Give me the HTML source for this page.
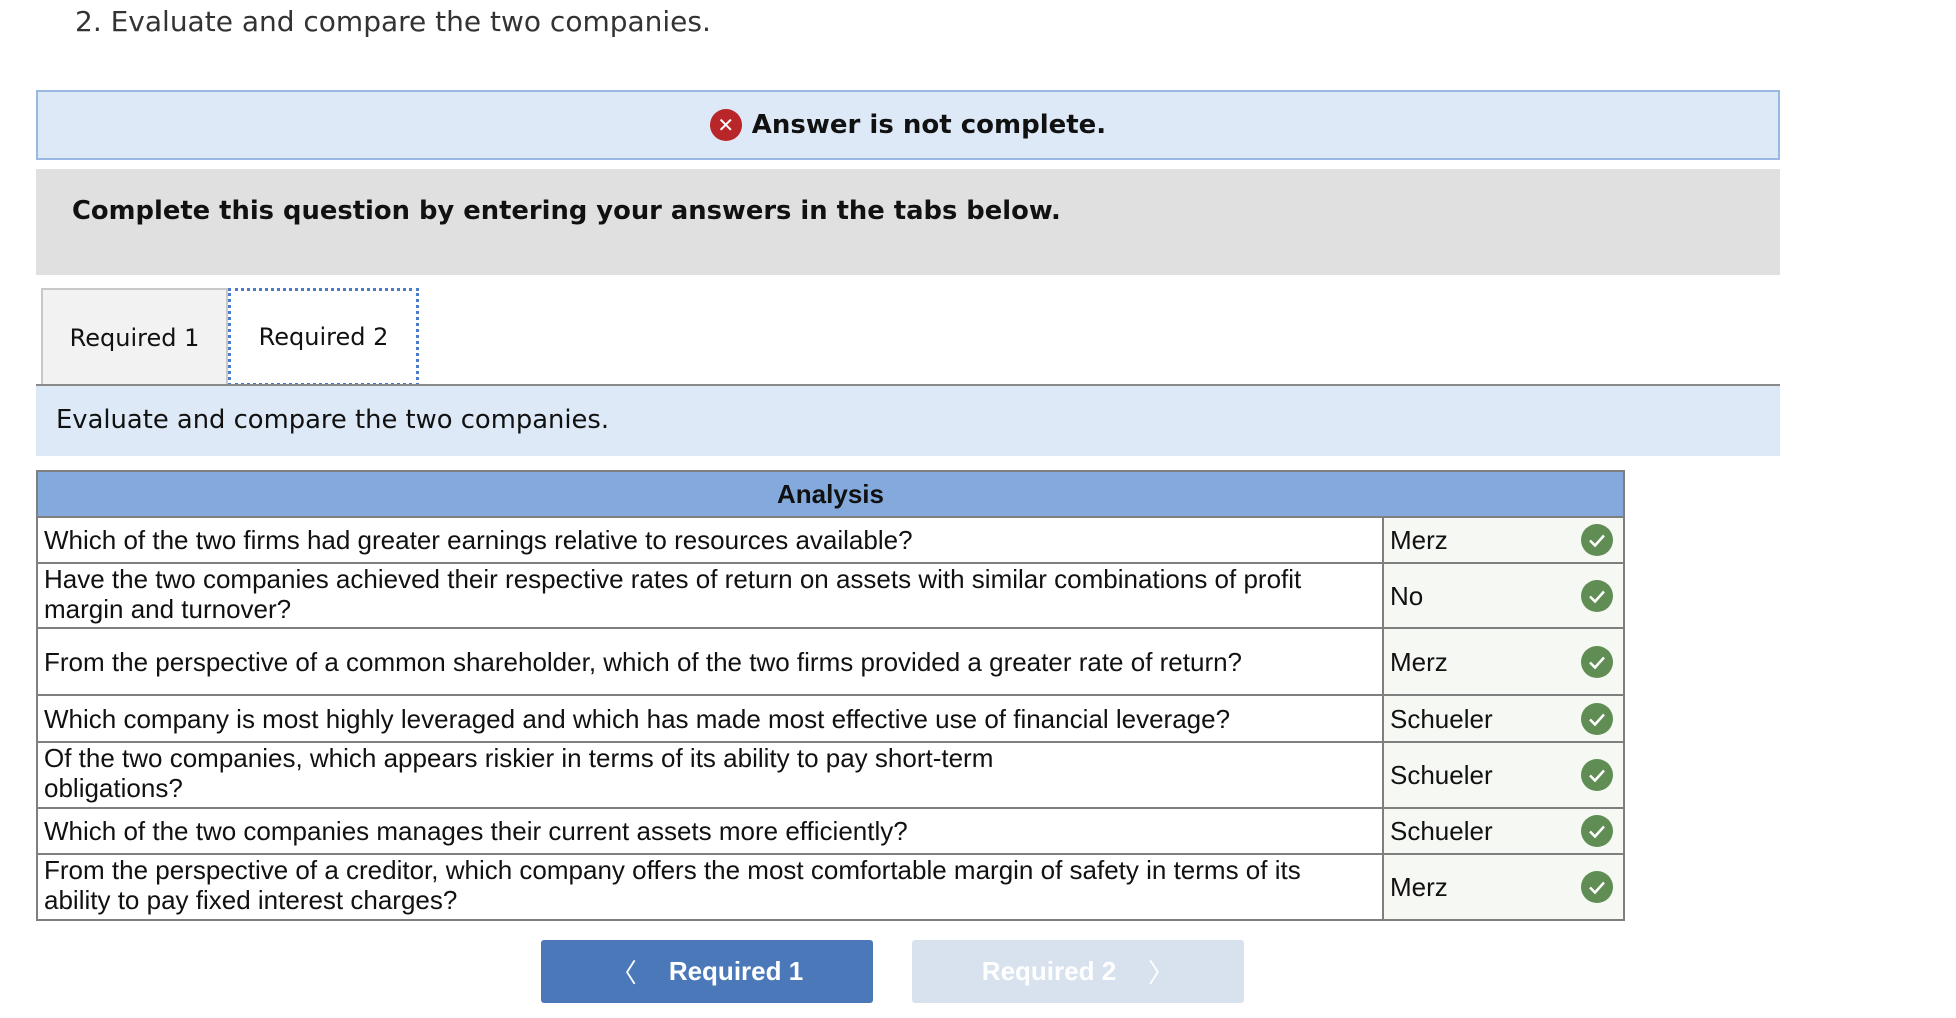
<!DOCTYPE html>
<html><head><meta charset="utf-8"><style>
*{box-sizing:border-box;margin:0;padding:0}
body{width:1956px;height:1018px;background:#fff;position:relative;overflow:hidden;font-family:"DejaVu Sans","Liberation Sans",sans-serif;color:#111}
.abs{position:absolute}
.h{left:75px;top:22px;font-size:28px;color:#333;line-height:40px;margin-top:-20px}
.alert{left:36px;top:90px;width:1744px;height:70px;background:#dde9f7;border:2px solid #9ab9e2;display:flex;align-items:center;justify-content:center;font-weight:bold;font-size:26px}
.x{width:32px;height:32px;border-radius:50%;background:#b8262a;color:#fff;display:inline-flex;align-items:center;justify-content:center;font-size:20px;margin-right:10px;font-weight:normal}
.gray{left:36px;top:169px;width:1744px;height:106px;background:#e0e0e0;font-weight:bold;font-size:25.8px;padding:27px 0 0 36px}
.tab{top:288px;height:98px;font-size:24px;display:flex;align-items:center;justify-content:center}
.t1{left:41px;width:187px;background:#f2f2f2;border:2px solid #c8c8c8;border-bottom:none}
.t2{left:228px;width:191px;background:#fff;border:3px dotted #4a7cc9}
.line{left:36px;top:384px;width:1744px;height:2px;background:#8a8a8a}
.inst{left:36px;top:386px;width:1744px;height:70px;background:#dde9f7;font-size:25.8px;padding:19px 0 0 20px}
table{position:absolute;left:36px;top:470px;width:1589px;border-collapse:collapse;font-family:"Liberation Sans",Arial,sans-serif;font-size:26px}
td,th{border:2px solid #7f7f7f;padding:0 6px;line-height:30px}
th{background:#84a9dd;height:46px;font-weight:bold}
td.a{width:241px;background:#f6f8f3;position:relative}
.ck{position:absolute;right:10px;top:50%;margin-top:-16px;width:32px;height:32px;border-radius:50%;background:#5f8d53}
.btn{top:940px;height:63px;width:332px;border-radius:3px;color:#fff;font-family:"Liberation Sans",Arial,sans-serif;font-weight:bold;font-size:26px;display:flex;align-items:center;justify-content:center}
</style></head><body>
<div class="abs h">2. Evaluate and compare the two companies.</div>
<div class="abs alert"><span class="x">✕</span>Answer is not complete.</div>
<div class="abs gray">Complete this question by entering your answers in the tabs below.</div>
<div class="abs tab t1">Required 1</div>
<div class="abs tab t2">Required 2</div>
<div class="abs line"></div>
<div class="abs inst">Evaluate and compare the two companies.</div>
<table>
<tr><th colspan="2">Analysis</th></tr>
<tr style="height:46px"><td>Which of the two firms had greater earnings relative to resources available?</td><td class="a">Merz<span class="ck"><svg width="32" height="32"><path d="M9 16.5l5 5 9-10" stroke="#fff" stroke-width="2.5" fill="none"/></svg></span></td></tr>
<tr style="height:65px"><td style="vertical-align:top">Have the two companies achieved their respective rates of return on assets with similar combinations of profit<br>margin and turnover?</td><td class="a">No<span class="ck"><svg width="32" height="32"><path d="M9 16.5l5 5 9-10" stroke="#fff" stroke-width="2.5" fill="none"/></svg></span></td></tr>
<tr style="height:67px"><td>From the perspective of a common shareholder, which of the two firms provided a greater rate of return?</td><td class="a">Merz<span class="ck"><svg width="32" height="32"><path d="M9 16.5l5 5 9-10" stroke="#fff" stroke-width="2.5" fill="none"/></svg></span></td></tr>
<tr style="height:47px"><td>Which company is most highly leveraged and which has made most effective use of financial leverage?</td><td class="a">Schueler<span class="ck"><svg width="32" height="32"><path d="M9 16.5l5 5 9-10" stroke="#fff" stroke-width="2.5" fill="none"/></svg></span></td></tr>
<tr style="height:66px"><td style="vertical-align:top">Of the two companies, which appears riskier in terms of its ability to pay short-term<br>obligations?</td><td class="a">Schueler<span class="ck"><svg width="32" height="32"><path d="M9 16.5l5 5 9-10" stroke="#fff" stroke-width="2.5" fill="none"/></svg></span></td></tr>
<tr style="height:46px"><td>Which of the two companies manages their current assets more efficiently?</td><td class="a">Schueler<span class="ck"><svg width="32" height="32"><path d="M9 16.5l5 5 9-10" stroke="#fff" stroke-width="2.5" fill="none"/></svg></span></td></tr>
<tr style="height:66px"><td style="vertical-align:top">From the perspective of a creditor, which company offers the most comfortable margin of safety in terms of its<br>ability to pay fixed interest charges?</td><td class="a">Merz<span class="ck"><svg width="32" height="32"><path d="M9 16.5l5 5 9-10" stroke="#fff" stroke-width="2.5" fill="none"/></svg></span></td></tr>
</table>
<div class="abs btn" style="left:541px;background:#4a78b8"><span style="font-weight:normal;margin-right:32px">〈</span>Required 1</div>
<div class="abs btn" style="left:912px;background:#d8e2ee">Required 2<span style="font-weight:normal;margin-left:32px">〉</span></div>
</body></html>
